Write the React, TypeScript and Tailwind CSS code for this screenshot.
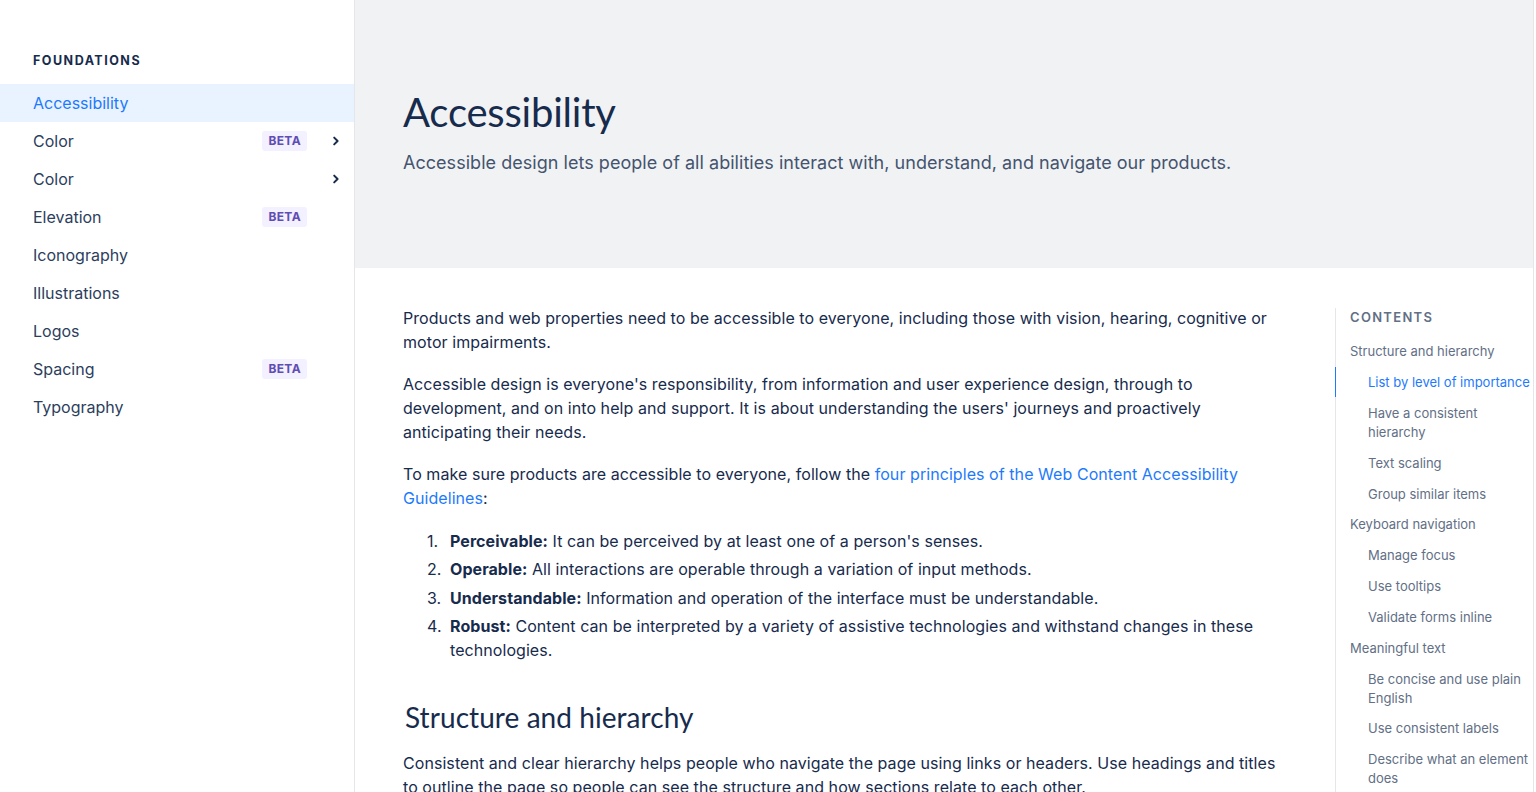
import React from "react";

const navItems: { label: string; beta?: boolean; chevron?: boolean; active?: boolean }[] = [
  { label: "Accessibility", active: true },
  { label: "Color", beta: true, chevron: true },
  { label: "Color", chevron: true },
  { label: "Elevation", beta: true },
  { label: "Iconography" },
  { label: "Illustrations" },
  { label: "Logos" },
  { label: "Spacing", beta: true },
  { label: "Typography" },
];

const toc: { label: string; sub?: boolean; active?: boolean }[] = [
  { label: "Structure and hierarchy" },
  { label: "List by level of importance", sub: true, active: true },
  { label: "Have a consistent hierarchy", sub: true },
  { label: "Text scaling", sub: true },
  { label: "Group similar items", sub: true },
  { label: "Keyboard navigation" },
  { label: "Manage focus", sub: true },
  { label: "Use tooltips", sub: true },
  { label: "Validate forms inline", sub: true },
  { label: "Meaningful text" },
  { label: "Be concise and use plain English", sub: true },
  { label: "Use consistent labels", sub: true },
  { label: "Describe what an element does", sub: true },
];

function Chevron() {
  return (
    <svg width="16" height="16" viewBox="0 0 16 16" fill="none">
      <path d="M6.2 4.6 9.6 8l-3.4 3.4" stroke="#172B4D" strokeWidth="2" strokeLinecap="round" strokeLinejoin="round" />
    </svg>
  );
}

export default function App() {
  return (
    <div className="flex h-[792px] w-[1536px] overflow-hidden bg-white font-['Inter','Liberation_Sans',sans-serif] text-[#172B4D]">
      {/* Sidebar */}
      <aside className="w-[355px] shrink-0 border-r border-[#E4E6EA] pt-[52px]">
        <div className="pl-[33px] pb-[13px] text-[12.5px] font-bold tracking-[0.12em] text-[#172B4D]">FOUNDATIONS</div>
        <nav className="flex flex-col">
          {navItems.map((it, i) => (
            <div
              key={i}
              className={`flex h-[38px] items-center pl-[33px] pr-[10px] text-[16px] ${
                it.active ? "bg-[#E9F2FF] text-[#1D7AFC]" : "text-[#2C3E5D]"
              }`}
            >
              <span className="flex-1">{it.label}</span>
              {it.beta && (
                <span className="mr-[21px] rounded-[3px] bg-[#F3F0FF] px-[6px] py-[1px] text-[12px] font-bold tracking-[0.03em] text-[#5E4DB2]">
                  BETA
                </span>
              )}
              {it.chevron ? (
                <span className="flex w-[16px] justify-center">
                  <Chevron />
                </span>
              ) : (
                <span className="w-[16px]" />
              )}
            </div>
          ))}
        </nav>
      </aside>

      {/* Main */}
      <main className="mr-[2px] flex min-w-0 flex-1 flex-col border-r border-[#E4E6EA]">
        <header className="h-[268px] shrink-0 bg-[#F1F2F4] pl-[48px] pt-[86px]">
          <h1 className="font-['Lato','Inter',sans-serif] text-[40px] leading-[52px] font-normal tracking-[-0.005em] text-[#172B4D]">
            Accessibility
          </h1>
          <p className="mt-[11px] text-[18px] leading-[28px] tracking-[0.002em] text-[#44546F]">
            Accessible design lets people of all abilities interact with, understand, and navigate our products.
          </p>
        </header>

        <div className="flex flex-1 pl-[48px]">
          <article className="w-[878px] pt-[38px] text-[16px] leading-[24px] tracking-[0.004em] text-[#172B4D]">
            <p>
              Products and web properties need to be accessible to everyone, including those with vision, hearing, cognitive or
              motor impairments.
            </p>
            <p className="mt-[18px]">
              Accessible design is everyone's responsibility, from information and user experience design, through to
              development, and on into help and support. It is about understanding the users' journeys and proactively
              anticipating their needs.
            </p>
            <p className="mt-[18px]">
              To make sure products are accessible to everyone, follow the{" "}
              <span className="text-[#1D7AFC]">four principles of the Web Content Accessibility Guidelines</span>:
            </p>
            <ol className="mt-[19px] flex flex-col gap-[4.4px] pl-[47px]">
              {[
                ["Perceivable:", "It can be perceived by at least one of a person's senses."],
                ["Operable:", "All interactions are operable through a variation of input methods."],
                ["Understandable:", "Information and operation of the interface must be understandable."],
                [
                  "Robust:",
                  "Content can be interpreted by a variety of assistive technologies and withstand changes in these technologies.",
                ],
              ].map(([b, t], i) => (
                <li key={i} className="relative">
                  <span className="absolute left-[-23px]">{i + 1}.</span>
                  <strong className="font-bold">{b}</strong> {t}
                </li>
              ))}
            </ol>
            <h2 className="mt-[37px] pl-[2px] font-['Lato','Inter',sans-serif] text-[28px] leading-[36px] font-normal text-[#172B4D]">
              Structure and hierarchy
            </h2>
            <p className="mt-[16px]">
              Consistent and clear hierarchy helps people who navigate the page using links or headers. Use headings and titles
              to outline the page so people can see the structure and how sections relate to each other.
            </p>
          </article>

          <div className="ml-auto w-[198px] shrink-0 pt-[40px]">
            <div className="border-l border-[#E4E6EA] pb-[40px]">
              <div className="pl-[14px] text-[13px] font-semibold tracking-[0.1em] text-[#626F86]">CONTENTS</div>
              <ul className="mt-[9px] flex flex-col">
                {toc.map((t, i) => (
                  <li
                    key={i}
                    className={`relative py-[5.92px] pr-[2px] text-[13px] leading-[19px] ${t.sub ? "pl-[32px]" : "pl-[14px]"} ${
                      t.active ? "text-[#1D7AFC]" : "text-[#626F86]"
                    }`}
                  >
                    {t.active && <span className="absolute left-[-1px] top-[0px] h-[30px] w-[1px] bg-[#1D7AFC]" />}
                    {t.label}
                  </li>
                ))}
              </ul>
            </div>
          </div>
        </div>
      </main>
    </div>
  );
}
